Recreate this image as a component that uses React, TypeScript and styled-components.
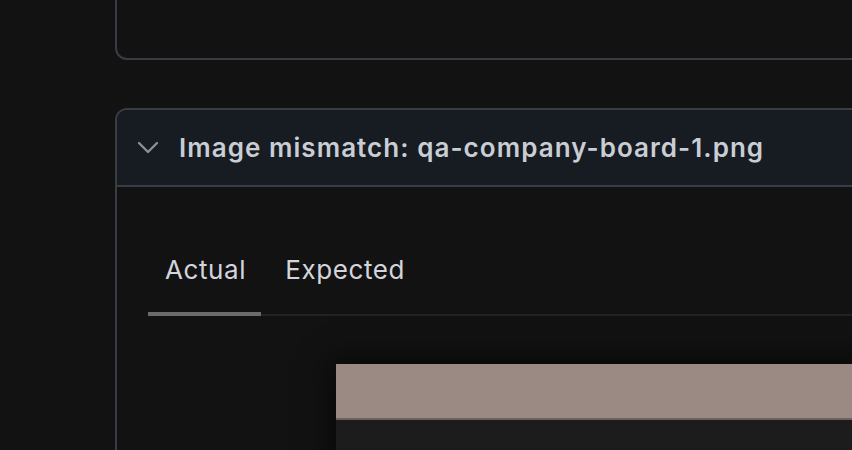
import React, { useState } from 'react'
import styled, { createGlobalStyle } from 'styled-components'

const Global = createGlobalStyle`
  html, body {
    margin: 0;
    padding: 0;
    background: #121212;
    overflow: hidden;
  }
  body {
    font-family: Inter, 'Noto Sans', 'Liberation Sans', sans-serif;
    -webkit-font-smoothing: antialiased;
  }
`

const Page = styled.div`
  width: 852px;
  height: 450px;
  padding-left: 115px;
  box-sizing: border-box;
  display: flex;
  flex-direction: column;
  gap: 48px;
  overflow: hidden;
`

const Card = styled.section<{ $top?: boolean }>`
  width: 900px;
  flex-shrink: 0;
  box-sizing: border-box;
  border: 2px solid #393c42;
  border-radius: 12px;
  background: #121212;
  overflow: hidden;
  ${p => p.$top && 'margin-top: -30px; height: 90px;'}
`

const Header = styled.div`
  height: 75px;
  display: flex;
  align-items: center;
  gap: 20px;
  padding-left: 20px;
  background: #171b22;
  border-bottom: 2px solid #393c42;
`

const Title = styled.h2`
  margin: 0;
  font-size: 26px;
  font-weight: 600;
  letter-spacing: 1.05px;
  color: #c9cdd4;
`

const Body = styled.div`
  padding: 41px 0 0 31px;
`

const TabList = styled.div`
  display: flex;
  gap: 7px;
  border-bottom: 2px solid #1f2328;
  width: 900px;
`

const Tab = styled.button<{ $active: boolean }>`
  appearance: none;
  background: none;
  border: none;
  margin: 0 0 -2px 0;
  padding: 24px 15px 24px 17px;
  font-family: inherit;
  font-size: 26px;
  line-height: 36px;
  letter-spacing: 0.6px;
  color: #d2d5db;
  cursor: pointer;
  border-bottom: 4px solid ${p => (p.$active ? '#6b6b6b' : 'transparent')};
`

const Preview = styled.div`
  padding: 48px 0 0 188px;
`

const Shot = styled.div`
  width: 600px;
  height: 200px;
  background: #1c1c1c;
  box-shadow: 0 0 28px 6px rgba(0, 0, 0, 0.55);
`

const ShotBar = styled.div`
  height: 54px;
  background: #9b8a83;
  border-bottom: 2px solid #6e625e;
`

function Chevron () {
  return (
    <svg width='22' height='14' viewBox='0 0 22 14' fill='none'>
      <path d='M2 2l9 9 9-9' stroke='#8b8f96' strokeWidth='2.4' strokeLinecap='round' strokeLinejoin='round' />
    </svg>
  )
}

export default function App () {
  const [tab, setTab] = useState('actual')
  return (
    <>
      <Global />
      <Page>
        <Card $top />
        <Card>
          <Header>
            <Chevron />
            <Title>Image mismatch: qa-company-board-1.png</Title>
          </Header>
          <Body>
            <TabList>
              <Tab $active={tab === 'actual'} onClick={() => setTab('actual')}>Actual</Tab>
              <Tab $active={tab === 'expected'} onClick={() => setTab('expected')}>Expected</Tab>
            </TabList>
            <Preview>
              <Shot>
                <ShotBar />
              </Shot>
            </Preview>
          </Body>
        </Card>
      </Page>
    </>
  )
}
